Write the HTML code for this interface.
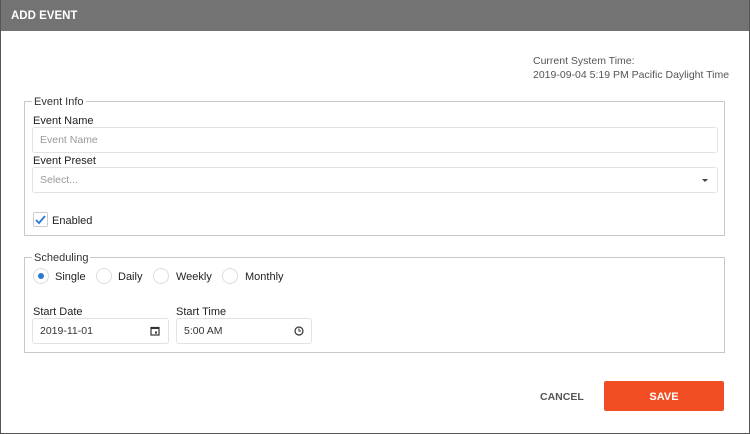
<!DOCTYPE html>
<html><head><style>
*{box-sizing:border-box;margin:0;padding:0}
body{width:750px;height:434px;background:#fff;font-family:"Liberation Sans",sans-serif;color:#333;position:relative;overflow:hidden;font-size:11px}
.a{position:absolute}
.hdr{left:0;top:0;width:750px;height:31px;background:#737373;color:#fff;font-weight:bold;font-size:11.5px;padding:10px 0 0 11px}
.frame{left:0;top:0;width:750px;height:434px;border:1px solid #555;border-top:none}
.fs{border:1px solid #c8c8c8;left:24px;width:701px}
.lg{background:#fff;padding:0 2px;font-size:11px;color:#333}
.inp{border:1px solid #e2e2e2;border-radius:3px;background:#fff;color:#999;font-size:10.5px;padding-left:7px;display:flex;align-items:center}
.lbl{font-size:11px;color:#222}
.rad{width:16px;height:16px;border:1px solid #ddd;border-radius:50%}
</style></head><body>
<div class="a hdr">ADD EVENT</div>
<div class="a frame"></div>
<div class="a" style="left:533px;top:54px;font-size:10.5px;color:#555;line-height:14px">Current System Time:<br>2019-09-04 5:19 PM Pacific Daylight Time</div>

<div class="a fs" style="top:101px;height:135px"></div>
<div class="a lg" style="left:32px;top:96px">Event Info</div>
<div class="a lbl" style="left:33px;top:115px">Event Name</div>
<div class="a inp" style="left:32px;top:127px;width:686px;height:26px">Event Name</div>
<div class="a lbl" style="left:33px;top:155px">Event Preset</div>
<div class="a inp" style="left:32px;top:167px;width:686px;height:26px">Select...</div>
<div class="a" style="left:702px;top:179px;border-left:3px solid transparent;border-right:3px solid transparent;border-top:3px solid #444"></div>
<div class="a" style="left:33px;top:212px;width:15px;height:15px;border:1px solid #ccc;border-radius:2px"></div>
<svg class="a" style="left:34px;top:213px" width="13" height="13"><path d="M2 7 L5 10 L11 3" stroke="#2a7bd0" stroke-width="1.8" fill="none"/></svg>
<div class="a lbl" style="left:52px;top:215px">Enabled</div>

<div class="a fs" style="top:257px;height:96px"></div>
<div class="a lg" style="left:32px;top:252px">Scheduling</div>
<div class="a rad" style="left:33px;top:268px"></div>
<div class="a" style="left:38px;top:273px;width:6px;height:6px;border-radius:50%;background:#2a7bd0"></div>
<div class="a lbl" style="left:55px;top:271px">Single</div>
<div class="a rad" style="left:96px;top:268px"></div>
<div class="a lbl" style="left:118px;top:271px">Daily</div>
<div class="a rad" style="left:153px;top:268px"></div>
<div class="a lbl" style="left:176px;top:271px">Weekly</div>
<div class="a rad" style="left:222px;top:268px"></div>
<div class="a lbl" style="left:245px;top:271px">Monthly</div>
<div class="a lbl" style="left:33px;top:306px">Start Date</div>
<div class="a inp" style="left:32px;top:318px;width:137px;height:26px;color:#333">2019-11-01</div>
<svg class="a" style="left:150px;top:326px" width="10" height="10"><rect x="1" y="1.5" width="8" height="7.5" fill="none" stroke="#333" stroke-width="1.2"/><rect x="1" y="1" width="8" height="2" fill="#333"/><rect x="5" y="5.5" width="2" height="2" fill="#333"/></svg>
<div class="a lbl" style="left:176px;top:306px">Start Time</div>
<div class="a inp" style="left:176px;top:318px;width:136px;height:26px;color:#333">5:00 AM</div>
<svg class="a" style="left:294px;top:326px" width="10" height="10"><circle cx="5" cy="5" r="4" fill="none" stroke="#333" stroke-width="1.2"/><path d="M5 2.5V5H7" stroke="#333" fill="none"/></svg>

<div class="a" style="left:540px;top:391px;font-size:10.5px;font-weight:bold;color:#555">CANCEL</div>
<div class="a" style="left:604px;top:381px;width:120px;height:30px;background:#f24e24;border-radius:2px;color:#fff;font-weight:bold;font-size:11px;text-align:center;line-height:32px">SAVE</div>
</body></html>
